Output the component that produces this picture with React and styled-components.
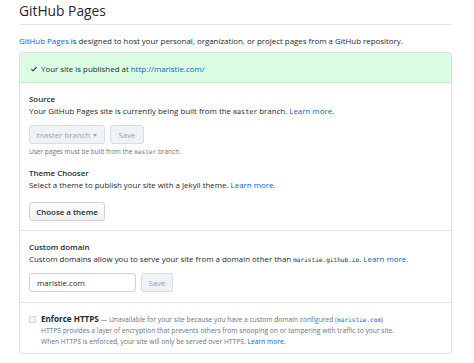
import styled, { createGlobalStyle } from 'styled-components'

const GlobalStyle = createGlobalStyle`
  html, body {
    margin: 0;
    padding: 0;
    background: #fff;
  }
  body {
    font-family: "Open Sans", "Noto Sans", sans-serif;
    color: #24292e;
  }
`

const Page = styled.div`
  width: 433px;
  padding: 0 22px 0 19px;
`

const Heading = styled.h2`
  margin: 0;
  padding: 1px 0 3px;
  font-size: 13.8px;
  font-weight: 400;
  line-height: 20px;
  border-bottom: 1px solid #e4e6e9;
`

const Intro = styled.p`
  margin: 10px 0 0;
  font-size: 7.9px;
  line-height: 12px;
`

const Link = styled.a`
  color: #0366d6;
  text-decoration: none;
`

const Code = styled.code`
  font-family: "DejaVu Sans Mono", "Liberation Mono", monospace;
  font-size: ${(p) => (p.$small ? '6.1px' : '6.7px')};
  color: ${(p) => (p.$blue ? '#0366d6' : 'inherit')};
`

const Box = styled.div`
  margin-top: 5px;
  border: 1px solid #dcdfe3;
  border-radius: 3px;
  overflow: hidden;
`

const Flash = styled.div`
  display: flex;
  align-items: center;
  gap: 3px;
  height: 30px;
  padding: 2px 10px 0;
  box-sizing: border-box;
  background: #dcfce4;
  border-bottom: 1px solid #c6e9cf;
  font-size: 7.9px;
`

const Section = styled.div`
  padding: ${(p) => p.$pad || '10px 9px'};
  border-top: ${(p) => (p.$divided ? '1px solid #e4e6e9' : 'none')};
`

const Label = styled.div`
  font-size: 7.9px;
  font-weight: 600;
  line-height: 12px;
  margin-top: ${(p) => p.$gap || '0'};
`

const Desc = styled.div`
  font-size: 7.9px;
  line-height: 12px;
`

const Note = styled.div`
  margin-top: 3px;
  font-size: 6.5px;
  line-height: 10px;
  color: #6a737d;
`

const Row = styled.div`
  display: flex;
  gap: 5px;
  margin-top: ${(p) => p.$top || '7px'};
`

const Button = styled.button`
  height: 19px;
  width: ${(p) => p.$w || 'auto'};
  padding: 0;
  justify-content: center;
  border: 1px solid ${(p) => (p.disabled ? '#d8dde2' : '#cfd3d7')};
  border-radius: 3px;
  background: ${(p) =>
    p.disabled ? '#eff3f6' : 'linear-gradient(#fafbfc, #eff3f6)'};
  color: ${(p) => (p.disabled ? '#9ba1a8' : '#24292e')};
  font-family: inherit;
  font-size: 7.9px;
  font-weight: ${(p) => (p.disabled ? 400 : 600)};
  display: inline-flex;
  align-items: center;
  gap: 3px;
  cursor: ${(p) => (p.disabled ? 'default' : 'pointer')};
`

const Caret = styled.span`
  width: 0;
  height: 0;
  border-left: 2.5px solid transparent;
  border-right: 2.5px solid transparent;
  border-top: 3px solid #9ba1a8;
  margin-top: 1px;
`

const Input = styled.input`
  width: 107px;
  height: 19px;
  box-sizing: border-box;
  padding: 0 7px;
  border: 1px solid #d1d5da;
  border-radius: 3px;
  font-family: inherit;
  font-size: 7.9px;
  color: #24292e;
  box-shadow: inset 0 1px 2px rgba(27, 31, 35, 0.06);
`

const CheckRow = styled.div`
  display: flex;
  gap: 5px;
`

const CheckBox = styled.span`
  flex: none;
  width: 5px;
  height: 5px;
  margin-top: 3px;
  border: 1px solid #d5d9dd;
  border-radius: 1px;
  background: #f3f4f6;
`

const CheckText = styled.div`
  font-size: 6.7px;
  line-height: 11px;
  color: #6a737d;
`

const Strong = styled.strong`
  font-size: 8.1px;
  font-weight: 700;
  color: #24292e;
`

function CheckIcon() {
  return (
    <svg width="8" height="8" viewBox="0 0 12 16" fill="#24292e">
      <path fillRule="evenodd" d="M12 5l-8 8-4-4 1.5-1.5L4 10l6.5-6.5L12 5z" />
    </svg>
  )
}

export default function App() {
  return (
    <Page>
      <GlobalStyle />
      <Heading>GitHub Pages</Heading>
      <Intro>
        <Link href="#">GitHub Pages</Link> is designed to host your personal,
        organization, or project pages from a GitHub repository.
      </Intro>
      <Box>
        <Flash>
          <CheckIcon />
          <span>
            Your site is published at <Link href="#">http://maristie.com/</Link>
          </span>
        </Flash>
        <Section $pad="10px 9px 9px">
          <Label>Source</Label>
          <Desc>
            Your GitHub Pages site is currently being built from the{' '}
            <Code>master</Code> branch. <Link href="#">Learn more.</Link>
          </Desc>
          <Row>
            <Button disabled $w="76px">
              master branch <Caret />
            </Button>
            <Button disabled $w="34px">Save</Button>
          </Row>
          <Note>
            User pages must be built from the <Code $small>master</Code> branch.
          </Note>
          <Label $gap="10px">Theme Chooser</Label>
          <Desc>
            Select a theme to publish your site with a Jekyll theme.{' '}
            <Link href="#">Learn more.</Link>
          </Desc>
          <Row $top="11px">
            <Button $w="76px">Choose a theme</Button>
          </Row>
        </Section>
        <Section $divided $pad="10px 9px 10px">
          <Label>Custom domain</Label>
          <Desc>
            Custom domains allow you to serve your site from a domain other than{' '}
            <Code $small>maristie.github.io</Code>. <Link href="#">Learn more.</Link>
          </Desc>
          <Row $top="7px">
            <Input defaultValue="maristie.com" />
            <Button disabled $w="32px">Save</Button>
          </Row>
        </Section>
        <Section $divided $pad="10px 9px 6px">
          <CheckRow>
            <CheckBox />
            <CheckText>
              <Strong>Enforce HTTPS</Strong> — Unavailable for your site because you
              have a custom domain configured (<Code $small $blue>maristie.com</Code>)
              <br />
              HTTPS provides a layer of encryption that prevents others from snooping
              on or tampering with traffic to your site.
              <br />
              When HTTPS is enforced, your site will only be served over HTTPS.{' '}
              <Link href="#">Learn more.</Link>
            </CheckText>
          </CheckRow>
        </Section>
      </Box>
    </Page>
  )
}
